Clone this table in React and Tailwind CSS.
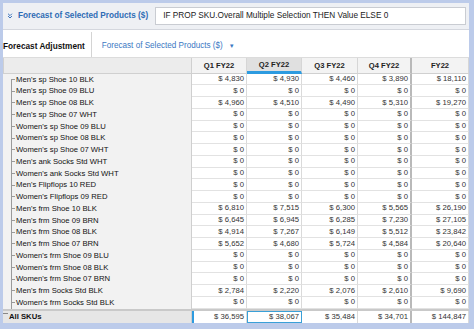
// forecast adjustment grid

import { ChevronsDown } from 'lucide-react';

const ROWS = [
  ["Men's sp Shoe 10 BLK", '4,830', '4,930', '4,460', '3,890', '18,110'],
  ["Men's sp Shoe 09 BLU"],
  ["Men's sp Shoe 08 BLK", '4,960', '4,510', '4,490', '5,310', '19,270'],
  ["Men's sp Shoe 07 WHT"],
  ["Women's sp Shoe 09 BLU"],
  ["Women's sp Shoe 08 BLK"],
  ["Women's sp Shoe 07 WHT"],
  ["Men's ank Socks Std WHT"],
  ["Women's ank Socks Std WHT"],
  ["Men's Flipflops 10 RED"],
  ["Women's Flipflops 09 RED"],
  ["Men's frm Shoe 10 BLK", '6,810', '7,515', '6,300', '5,565', '26,190'],
  ["Men's frm Shoe 09 BRN", '6,645', '6,945', '6,285', '7,230', '27,105'],
  ["Men's frm Shoe 08 BLK", '4,914', '7,267', '6,149', '5,512', '23,842'],
  ["Men's frm Shoe 07 BRN", '5,652', '4,680', '5,724', '4,584', '20,640'],
  ["Women's frm Shoe 09 BLU"],
  ["Women's frm Shoe 08 BLK"],
  ["Women's frm Shoe 07 BRN"],
  ["Men's frm Socks Std BLK", '2,784', '2,220', '2,076', '2,610', '9,690'],
  ["Women's frm Socks Std BLK"],
];

const TOTALS = ['36,595', '38,067', '35,484', '34,701', '144,847'];

const HEADERS = ['Q1 FY22', 'Q2 FY22', 'Q3 FY22', 'Q4 FY22', 'FY22'];

// widths for Q1..FY22
const COL_W = ['w-[55px]', 'w-[55px]', 'w-[56px]', 'w-[54px]', 'w-[57px]'];

const ValueCell = ({ value, idx }) => (
  <div
    className={`${COL_W[idx]} h-full flex items-center justify-end pr-[2px] bg-white border-b border-[#e2e2e2] ${
      idx === 3 ? 'border-r-2 border-r-[#b9b9b9]' : 'border-r border-r-[#dadada]'
    }`}
  >
    $ {value}
  </div>
);

const TreeMark = ({ first }) => (
  <div className="w-[4px] h-full flex flex-col">
    <div className={`flex-1 ${first ? '' : 'border-l border-[#9a9a9a]'}`} />
    <div className="h-px border-l border-[#9a9a9a] bg-[#9a9a9a]" />
    <div className="flex-1 border-l border-[#9a9a9a]" />
  </div>
);

export default function App() {
  return (
    <div className="w-[474px] h-[329px] overflow-hidden bg-[#bccbea] pt-[3px] pl-[3px] pr-[5px] pb-[7px] font-['Liberation_Sans',Arial,sans-serif]">
      <div className="h-full bg-white flex flex-col">
        {/* formula bar */}
        <div className="h-[27px] shrink-0 bg-[#eef0f4] border-b border-[#d4d7de] flex items-center pl-[2px] pr-[3px]">
          <ChevronsDown className="w-[8px] h-[8px] text-[#3a73bd] ml-[1px]" strokeWidth={3} />
          <span className="ml-[4px] text-[8.2px] font-bold text-[#2f6cb5] whitespace-nowrap">
            Forecast of Selected Products ($)
          </span>
          <div className="ml-[7px] flex-1 h-[18px] bg-white border border-[#c9ccd2] flex items-center pl-[7px] text-[8.25px] text-[#222] whitespace-nowrap">
            IF PROP SKU.Overall Multiple Selection THEN Value ELSE 0
          </div>
        </div>

        {/* tabs */}
        <div className="h-[28px] shrink-0 flex items-end border-b border-[#dcdcdc]">
          <div className="h-full flex items-center pt-[7px] pr-[6px] text-[8.25px] font-bold text-[#111] whitespace-nowrap">
            Forecast Adjustment
          </div>
          <div className="h-[25px] border-l border-[#d4d4d4] flex items-center pt-[4px] pl-[10px] text-[8.15px] text-[#3b78c3] whitespace-nowrap">
            Forecast of Selected Products ($)
            <span className="ml-[6px] text-[6px]">▼</span>
          </div>
        </div>

        {/* header row */}
        <div className="h-[15.5px] shrink-0 flex text-[7.6px] font-bold text-[#222]">
          <div className="w-[189px] h-full bg-[#ececec] border-l border-b border-r border-[#d0d0d0]" />
          {HEADERS.map((h, i) => (
            <div
              key={h}
              className={`${COL_W[i]} h-full flex items-center justify-center border-b ${
                i === 1 ? 'bg-[#e0e0e0] border-b-[3px] border-b-[#2d9be0]' : 'bg-[#f3f3f3] border-b-[#d0d0d0]'
              } ${i === 3 ? 'border-r-2 border-r-[#b9b9b9]' : 'border-r border-r-[#d6d6d6]'}`}
            >
              {h}
            </div>
          ))}
        </div>

        {/* data rows */}
        <div className="flex flex-col text-[7.7px] text-[#333]">
          {ROWS.map(([label, ...vals], r) => (
            <div key={label} className="h-[11.75px] flex">
              <div className="w-[189px] h-full bg-[#f2f2f2] border-r border-[#cfcfcf] flex items-center pl-[8px] text-[#111]">
                <TreeMark first={r === 0} />
                <span className="ml-[1px] whitespace-nowrap">{label}</span>
              </div>
              {[0, 1, 2, 3, 4].map((i) => (
                <ValueCell key={i} idx={i} value={vals[i] || '0'} />
              ))}
            </div>
          ))}
        </div>

        {/* totals */}
        <div className="h-[2px] shrink-0 bg-[#c9c9c9]" />
        <div className="h-[12px] shrink-0 flex text-[7.7px] text-[#333]">
          <div className="w-[189px] h-full bg-[#e6e6e6] border-r border-[#cfcfcf] flex items-start">
            <div className="w-[5px] h-px bg-[#888] mt-[2px]" />
            <span className="ml-[1px] self-center font-bold text-[#111]">All SKUs</span>
          </div>
          {TOTALS.map((v, i) => (
            <div
              key={i}
              className={`${COL_W[i]} h-full flex items-center justify-end pr-[2px] bg-white ${
                i === 0 ? 'border-l-2 border-l-[#2d9be0]' : ''
              } ${i === 1 ? 'border border-[#3aa0d8]' : ''} ${
                i === 3 ? 'border-r-2 border-r-[#b9b9b9]' : i === 1 ? '' : 'border-r border-r-[#dadada]'
              }`}
            >
              $ {v}
            </div>
          ))}
        </div>
      </div>
    </div>
  );
}
